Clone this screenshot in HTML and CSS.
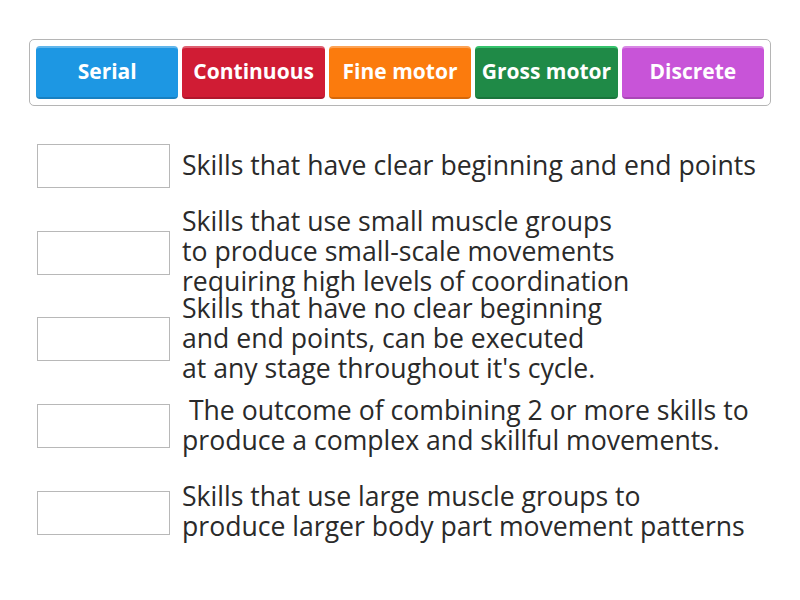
FILE: index.html
```html
<!DOCTYPE html>
<html lang="en">
<head>
  <meta charset="UTF-8">
  <title>Match up</title>
  <link rel="stylesheet" href="styles.css">
</head>
<body>
  <div class="tray">
    <div class="tile blue">Serial</div>
    <div class="tile red">Continuous</div>
    <div class="tile orange">Fine motor</div>
    <div class="tile green">Gross motor</div>
    <div class="tile purple">Discrete</div>
  </div>

  <div class="rows">
    <div class="row">
      <div class="slot"></div>
      <p>Skills that have clear beginning and end points</p>
    </div>
    <div class="row">
      <div class="slot"></div>
      <p>Skills that use small muscle groups<br>to produce small-scale movements<br>requiring high levels of coordination</p>
    </div>
    <div class="row">
      <div class="slot"></div>
      <p>Skills that have no clear beginning<br>and end points, can be executed<br>at any stage throughout it's cycle.</p>
    </div>
    <div class="row">
      <div class="slot"></div>
      <p>&nbsp;The outcome of combining 2 or more skills to<br>produce a complex and skillful movements.</p>
    </div>
    <div class="row">
      <div class="slot"></div>
      <p>Skills that use large muscle groups to<br>produce larger body part movement patterns</p>
    </div>
  </div>
</body>
</html>
```

FILE: styles.css
```css
body {
  margin: 0;
  padding: 39px 29px 0 29px;
  font-family: 'Open Sans', sans-serif;
  background: #fff;
  color: #2a2a2a;
}
.tray {
  width: 728px;
  display: flex;
  gap: 4px;
  padding: 6px;
  border: 1px solid #b5b5b5;
  border-radius: 5px;
}
.tile {
  flex: 1;
  height: 53px;
  box-sizing: border-box;
  display: flex;
  align-items: center;
  justify-content: center;
  padding-bottom: 3px;
  color: #fff;
  font-weight: 700;
  font-size: 21px;
  white-space: nowrap;
  border-radius: 4px;
  border-top: 2px solid rgba(255,255,255,0.3);
  border-bottom: 2px solid rgba(0,0,0,0.15);
}
.blue { background: #1d97e3; }
.red { background: #d01c34; }
.orange { background: #fb7b0d; }
.green { background: #1f8a47; border-top-color: #35c36c; }
.purple { background: #c854d8; }

.rows {
  margin-top: 17px;
  padding-left: 8px;
}
.row {
  height: 86.6px;
  display: flex;
  align-items: center;
  gap: 12px;
}
.slot {
  width: 133px;
  height: 44px;
  box-sizing: border-box;
  border: 1px solid #b8b8b8;
  flex-shrink: 0;
}
.row p {
  margin: -3px 0 0 0;
  font-size: 26.6px;
  line-height: 30px;
  white-space: nowrap;
}
```
